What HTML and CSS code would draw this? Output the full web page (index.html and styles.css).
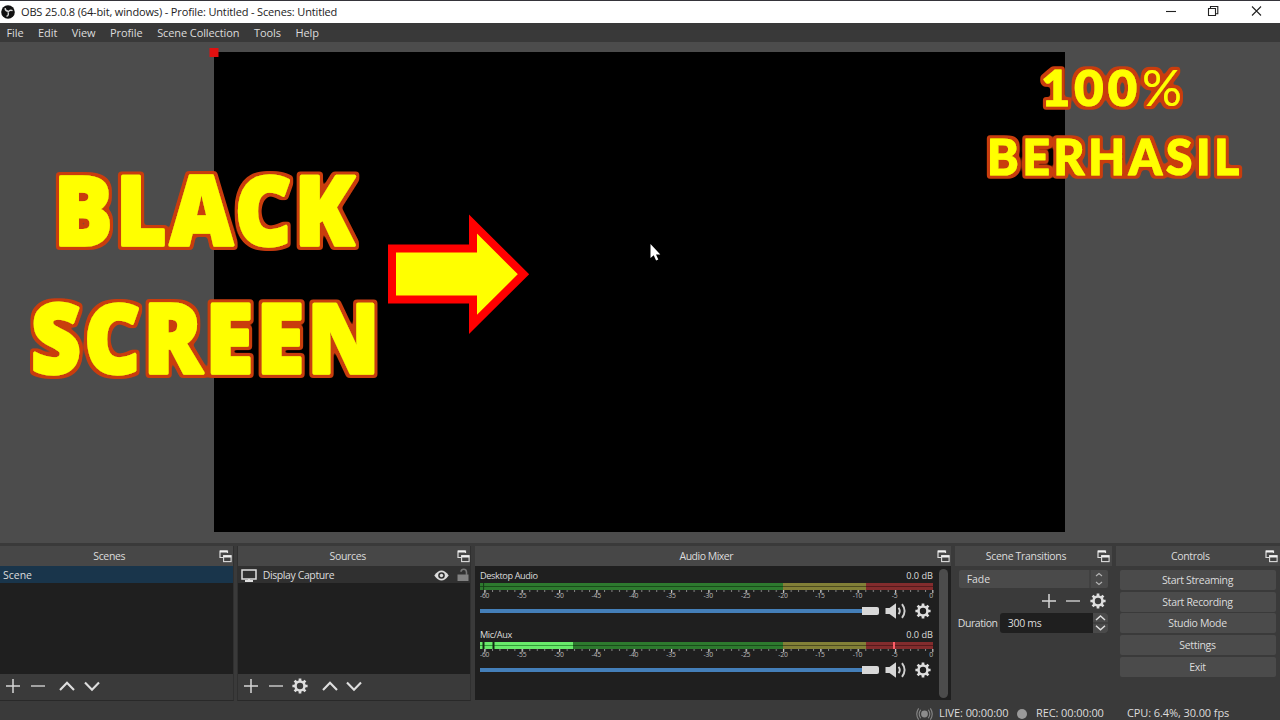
FILE: index.html
```html
<!DOCTYPE html>
<html lang="en">
<head>
<meta charset="utf-8">
<title>OBS 25.0.8</title>
<link rel="stylesheet" href="styles.css">
</head>
<body>
<svg class="defs" aria-hidden="true">
  <defs>
    <symbol id="popout" viewBox="0 0 13 13"><path d="M8.5 3V1H1v6.5h3M1 1.5h7.5" fill="none" stroke="#dcdcdc" stroke-width="1.2"/><rect x="4.6" y="5.6" width="7.5" height="6" fill="#414141" stroke="#dcdcdc" stroke-width="1.1"/><path d="M1 1.5h7.5M4.5 6.5h7.8" stroke="#f2f2f2" stroke-width="2"/></symbol>
    <symbol id="plus" viewBox="0 0 16 16"><path d="M8 1v14M1 8h14" stroke="#d6d6d6" stroke-width="1.5"/></symbol>
    <symbol id="minus" viewBox="0 0 16 16"><path d="M1 8h14" stroke="#d0d0d0" stroke-width="1.4"/></symbol>
    <symbol id="up" viewBox="0 0 16 16"><path d="M1 12l7-7.3 7 7.3" fill="none" stroke="#dedede" stroke-width="2.1"/></symbol>
    <symbol id="down" viewBox="0 0 16 16"><path d="M1 4.5l7 7.3 7-7.3" fill="none" stroke="#dedede" stroke-width="2.1"/></symbol>
    <symbol id="gear" viewBox="0 0 16 16"><circle cx="8" cy="8" r="4.5" fill="none" stroke="#dedede" stroke-width="2.6"/><g stroke="#dedede" stroke-width="2.7"><path d="M8 .4v3M8 12.6v3M.4 8h3M12.6 8h3M2.6 2.6l2.1 2.1M11.3 11.3l2.1 2.1M2.6 13.4l2.1-2.1M11.3 4.7l2.1-2.1"/></g></symbol>
    <symbol id="speaker" viewBox="0 0 22 16"><path d="M.5 5h4L11 .2v15.6L4.5 11h-4z" fill="#d6d6d6"/><path d="M13.5 4.8q2.6 3.2 0 6.4M17 1.2q5.2 6.8 0 13.6" fill="none" stroke="#cfcfcf" stroke-width="1.9"/></symbol>
    <pattern id="minor" x="4.5" width="7.467" height="20" patternUnits="userSpaceOnUse"><rect y="7" width="1" height="2" fill="#858585"/></pattern>
    <pattern id="major" x="4.3" width="37.33" height="20" patternUnits="userSpaceOnUse"><rect y="7" width="1.2" height="3.2" fill="#c4c4c4"/></pattern>
    <filter id="outline" x="-5%" y="-8%" width="110%" height="116%"><feMorphology in="SourceAlpha" operator="dilate" radius="3" result="wide"/><feGaussianBlur in="wide" stdDeviation="1.5" result="soft"/><feComponentTransfer in="soft" result="edge"><feFuncA type="linear" slope="4" intercept="-1.3"/></feComponentTransfer><feFlood flood-color="#c93c0e"/><feComposite in2="edge" operator="in" result="rim"/><feMerge><feMergeNode in="rim"/><feMergeNode in="SourceGraphic"/></feMerge></filter>
    <symbol id="scale" viewBox="0 0 458 18">
      <path fill="#2d7a2e" d="M0 0h303v7H0z"/><path fill="#828037" d="M303 0h83v7h-83z"/><path fill="#832c2d" d="M386 0h67v7h-67z"/>
      <path fill="#194d1a" d="M0 3h303v1.1H0z"/><path fill="#4d4b1f" d="M303 3h83v1.1h-83z"/><path fill="#551a1c" d="M386 3h67v1.1h-67z"/>
      <rect x="4" y="7" width="449" height="2" fill="url(#minor)"/><rect x="4" y="7" width="450" height="3.5" fill="url(#major)"/>
      <g class="ticks"><text x="4.6" y="15.2">-60</text><text x="41.8" y="15.2">-55</text><text x="79" y="15.2">-50</text><text x="116.3" y="15.2">-45</text><text x="153.6" y="15.2">-40</text><text x="191" y="15.2">-35</text><text x="228.3" y="15.2">-30</text><text x="265.6" y="15.2">-25</text><text x="303" y="15.2">-20</text><text x="340" y="15.2">-15</text><text x="377.4" y="15.2">-10</text><text x="414.6" y="15.2">-5</text><text x="451" y="15.2">0</text></g>
    </symbol>
  </defs>
</svg>

<header class="titlebar">
  <svg class="logo" viewBox="0 0 14 14"><circle cx="7" cy="7" r="6.8" fill="#111"/><g fill="none" stroke="#d5d5d5" stroke-width="1.4"><path d="M4.1 3.1Q4.3 6.2 7.2 6.3"/><path d="M11.6 5.7Q8.7 4.5 7.2 7"/><path d="M5.5 11.4Q8.3 10.2 7 7.2"/></g></svg>
  <span class="title">OBS 25.0.8 (64-bit, windows) - Profile: Untitled - Scenes: Untitled</span>
  <svg class="wincontrols" viewBox="0 0 100 22"><g fill="none" stroke="#222" stroke-width="1.1"><path d="M0 10.5h10"/><path d="M42.5 7.5h7v7h-7zM44.5 7V5.5h7.3v7.2H50"/><path d="M86 5.5l9 9M95 5.5l-9 9"/></g></svg>
</header>
<nav class="menubar"><span>File</span><span>Edit</span><span>View</span><span>Profile</span><span>Scene Collection</span><span>Tools</span><span>Help</span></nav>
<main class="preview"><div class="canvas"></div></main>

<section class="docks">
  <div class="dock scenes">
    <h2><span>Scenes</span><svg><use href="#popout"/></svg></h2>
    <div class="list"><div class="row selected">Scene</div></div>
    <div class="tools"><svg><use href="#plus"/></svg><svg><use href="#minus"/></svg><svg class="gap"><use href="#up"/></svg><svg><use href="#down"/></svg></div>
  </div>
  <div class="dock sources">
    <h2><span>Sources</span><svg><use href="#popout"/></svg></h2>
    <div class="list"><div class="row source">
      <svg class="monitor" viewBox="0 0 16 13"><path d="M1 1h14v9H1z" fill="none" stroke="#dedede" stroke-width="1.5"/><path d="M4 12h8M8 10v2" stroke="#dedede" stroke-width="2"/></svg>
      <span>Display Capture</span>
      <svg class="eye" viewBox="0 0 15 11"><path d="M.3 5.5Q7.5-4.5 14.7 5.5 7.5 15.5.3 5.5z" fill="#dcdcdc"/><circle cx="7.5" cy="5.5" r="3.3" fill="#303030"/><circle cx="7.5" cy="5.5" r="1.7" fill="#dcdcdc"/></svg>
      <svg class="lock" viewBox="0 0 12 14"><path d="M.5 6.5h11V13H.5z" fill="#818181"/><path d="M9.5 7V4Q9.3 1.3 6.7 1.3 4.2 1.3 4 3.7" fill="none" stroke="#777" stroke-width="1.6"/></svg>
    </div></div>
    <div class="tools"><svg><use href="#plus"/></svg><svg><use href="#minus"/></svg><svg><use href="#gear"/></svg><svg class="gap"><use href="#up"/></svg><svg><use href="#down"/></svg></div>
  </div>
  <div class="dock mixer">
    <h2><span>Audio Mixer</span><svg><use href="#popout"/></svg></h2>
    <div class="mixbody">
      <div class="strips">
        <div class="strip">
          <div class="name"><span>Desktop Audio</span><span class="db">0.0 dB</span></div>
          <svg class="meter" viewBox="0 0 458 18"><use href="#scale" width="458" height="18"/><path d="M3.6 0v7" stroke="#173b18"/></svg>
          <div class="fader"><i></i><svg class="spk"><use href="#speaker"/></svg><svg class="cog"><use href="#gear"/></svg></div>
        </div>
        <div class="strip">
          <div class="name"><span>Mic/Aux</span><span class="db">0.0 dB</span></div>
          <svg class="meter" viewBox="0 0 458 18"><use href="#scale" width="458" height="18"/><path d="M0 0h93v7H0z" fill="#68e96a"/><path d="M0 3.5h93" stroke="#329b38"/><path d="M3.5 0v7M13.5 0v7" stroke="#102b12" stroke-width="2"/><path d="M414 0v7" stroke="#ff5e68" stroke-width="2"/></svg>
          <div class="fader"><i></i><svg class="spk"><use href="#speaker"/></svg><svg class="cog"><use href="#gear"/></svg></div>
        </div>
      </div>
      <div class="scroll"></div>
    </div>
  </div>
  <div class="dock transitions">
    <h2><span>Scene Transitions</span><svg><use href="#popout"/></svg></h2>
    <div class="combo"><span>Fade</span><svg viewBox="0 0 18 18"><path d="M.5 0v18" stroke="#393939"/><path d="M6.5 6L9.5 3.5 12.5 6M6.5 12L9.5 14.5 12.5 12" fill="none" stroke="#b5b5b5" stroke-width="1.1"/></svg></div>
    <div class="tools"><svg><use href="#plus"/></svg><svg><use href="#minus"/></svg><svg><use href="#gear"/></svg></div>
    <div class="duration"><span>Duration</span><div class="spin"><b>300 ms</b><svg viewBox="0 0 15 20"><path d="M0 0h15v20H0z" fill="#4a4a4a"/><path d="M0 10h15" stroke="#353535"/><path d="M3 7l4.5-4L12 7M3 12.8l4.5 4 4.5-4" fill="none" stroke="#dedede" stroke-width="1.5"/></svg></div></div>
  </div>
  <div class="dock controls">
    <h2><span>Controls</span><svg><use href="#popout"/></svg></h2>
    <div class="buttons"><button>Start Streaming</button><button>Start Recording</button><button>Studio Mode</button><button>Settings</button><button>Exit</button></div>
  </div>
</section>
<footer class="status">
  <svg class="live" viewBox="0 0 18 14"><circle cx="9" cy="7" r="3.6" fill="#8d8d8d"/><path d="M5 2.5Q1.8 7 5 11.5M13 2.5Q16.2 7 13 11.5M2.8 1Q-1.2 7 2.8 13M15.2 1Q19.2 7 15.2 13" fill="none" stroke="#858585" stroke-width="1.2"/></svg>
  <span class="livetime">LIVE: 00:00:00</span><i></i><span class="rectime">REC: 00:00:00</span><span class="cpu">CPU: 6.4%, 30.00 fps</span>
</footer>

<svg class="overlay" viewBox="0 0 1280 720">
  <rect x="209.500" y="48" width="9" height="9" fill="#e01010"/>
  <g class="caption big" filter="url(#outline)">
    <text x="54" y="245" textLength="304" lengthAdjust="spacingAndGlyphs">BLACK</text>
    <text x="31" y="373" textLength="352" lengthAdjust="spacingAndGlyphs">SCREEN</text>
  </g>
  <path d="M392 248.500h81V224l50.500 50.200-50.500 50.200V299.500h-81z" fill="#ff0" stroke="#f00" stroke-width="8"/>
  <g class="caption small" filter="url(#outline)">
    <text x="1041" y="105.500" textLength="100" lengthAdjust="spacingAndGlyphs">100</text>
    <text class="percent" x="1142" y="105.500" textLength="44" lengthAdjust="spacingAndGlyphs">%</text>
    <text x="987" y="175" textLength="256" lengthAdjust="spacingAndGlyphs">BERHASIL</text>
  </g>
  <path d="M650.500 244v14l3.200-2.700 2.400 5.100 2.200-1-2.300-4.900h4.300z" fill="#fff"/>
</svg>
</body>
</html>
```
FILE: styles.css
```css
* { box-sizing: border-box; }
body { margin: 0; width: 1280px; height: 720px; overflow: hidden; display: flex; flex-direction: column; position: relative; background: #3a3a3a; color: #dcdcdc; font: 11px/15px "Open Sans", "Noto Sans", sans-serif; letter-spacing: -.1px; white-space: nowrap; }
svg { display: block; flex: none; }
.defs { width: 0; height: 0; position: absolute; }
.titlebar { height: 23px; flex: none; background: #fff; border-top: 1px solid #35343a; color: #222; display: flex; align-items: center; padding-left: 1px; }
.logo { width: 14px; height: 14px; margin-right: 6px; }
.title { flex: 1; letter-spacing: -.15px; padding-bottom: 1px; }
.wincontrols { width: 100px; height: 22px; margin-right: 14px; }
.menubar { height: 19px; flex: none; display: flex; gap: 14.6px; align-items: center; padding-left: 6.5px; padding-bottom: 1px; background: #393939; }
.preview { height: 501px; flex: none; background: #4c4c4c; padding: 10px 215px 11px 214px; }
.canvas { height: 480px; background: #000; }
.docks { height: 158px; flex: none; display: grid; grid-template-columns: 233.5px 234px 476px 157px 164px; column-gap: 3.75px; padding-top: 3px; font-size: 10.5px; letter-spacing: -.33px; }
.dock { display: flex; flex-direction: column; min-width: 0; }
.dock h2 { height: 20px; flex: none; margin: 0; font: inherit; background: #474747; display: flex; align-items: center; padding-right: 1.5px; }
.dock h2 span { flex: 1; text-align: center; padding-top: 1px; }
.dock h2 svg { width: 13px; height: 13px; }
.scenes, .sources { border-bottom: 1px solid #292929; border-right: 1px solid #303030; }
.sources { border-left: 1px solid #303030; }
.scenes h2 { padding-right: 1px; }
.sources h2 { padding-right: 0; }
.mixer h2 span { letter-spacing: -.5px; padding-left: 1px; }
.list { height: 108px; background: #1f1f1f; }
.row { height: 17px; display: flex; align-items: center; padding: 1px 3px 0; }
.selected { background: #19354b; letter-spacing: 0; }
.source { background: #303030; padding: 1px 1px 0 3px; }
.source span { flex: 1; padding-left: 5.5px; letter-spacing: -.4px; }
.monitor { width: 16px; height: 13px; }
.eye { width: 15px; height: 11px; margin-right: 8px; }
.lock { width: 12px; height: 14px; }
.tools { height: 24px; display: flex; gap: 8.5px; align-items: center; padding-left: 5px; }
.tools svg { width: 16px; height: 16px; }
.tools .gap { margin-left: 5px; }
.mixbody { height: 134px; background: #1f1f1f; display: flex; justify-content: space-between; padding: 3px 3px 0 5px; }
.strips { width: 458px; }
.strip { height: 59.4px; }
.name { height: 14px; display: flex; justify-content: space-between; width: 453px; font-size: 9.2px; line-height: 14px; letter-spacing: -.4px; }
.db { letter-spacing: 0; }
.meter { width: 458px; height: 18px; }
.ticks { font: 6.8px "Open Sans", sans-serif; fill: #bdbdbd; text-anchor: middle; letter-spacing: -.2px; }
.fader { height: 20px; display: flex; align-items: center; }
.fader i { width: 399px; height: 8px; background: linear-gradient(#d8d8d8, #d8d8d8) right / 17px 8px no-repeat, linear-gradient(#447fb9, #447fb9) left / 383px 4px no-repeat; border-radius: 2px; }
.spk { width: 22px; height: 16px; margin-left: 6px; }
.cog { width: 16px; height: 16px; margin-left: 8px; }
.scroll { width: 9px; height: 129px; border-radius: 5px; background: #4c4c4c; }
.combo { height: 18px; margin: 4px 4px 0 4px; background: #4a4a4a; border-radius: 2px; display: flex; justify-content: space-between; align-items: center; padding-left: 8px; letter-spacing: -.1px; }
.combo span { padding-top: 1px; }
.combo svg { width: 19px; height: 18px; }
.transitions .tools { justify-content: flex-end; padding-right: 6px; height: 25px; }
.duration { height: 20px; display: flex; justify-content: space-between; align-items: center; margin: 0 4px 0 3px; letter-spacing: -.45px; }
.duration span, .spin b { padding-top: 1px; }
.spin { width: 108px; height: 20px; background: #1f1f1f; border-radius: 3px; overflow: hidden; display: flex; justify-content: space-between; align-items: center; padding-left: 8px; letter-spacing: -.3px; }
.spin b { font-weight: 400; }
.spin svg { width: 15px; height: 20px; }
.buttons { padding: 4px 4px 0; display: flex; flex-direction: column; gap: 1.7px; }
.buttons button { height: 20px; margin: 0; padding: 1px 0 0; border: 0; border-radius: 2px; color: inherit; background: #4b4b4b; font: inherit; letter-spacing: inherit; }
.status { height: 19px; flex: none; display: flex; align-items: center; padding: 6px 0 0 916px; line-height: 13px; }
.status span { margin-top: -2px; }
.live { width: 17px; height: 14px; margin-right: 6px; }
.livetime { width: 78px; }
.status i { width: 10px; height: 10px; border-radius: 50%; background: #9a9a9a; margin-right: 9px; }
.rectime { width: 91px; }
.overlay { position: absolute; inset: 0; width: 1280px; height: 720px; pointer-events: none; }
.caption { fill: #ff0; stroke: #ff0; stroke-linejoin: round; font-family: "Noto Sans", sans-serif; font-weight: 900; }
.big { font-size: 95px; stroke-width: 3.4px; letter-spacing: 4px; }
.small { font-family: Lato, sans-serif; font-size: 50px; stroke-width: 1.2px; letter-spacing: 4px; }
.percent { font-weight: 400; stroke-width: 0; }
```
